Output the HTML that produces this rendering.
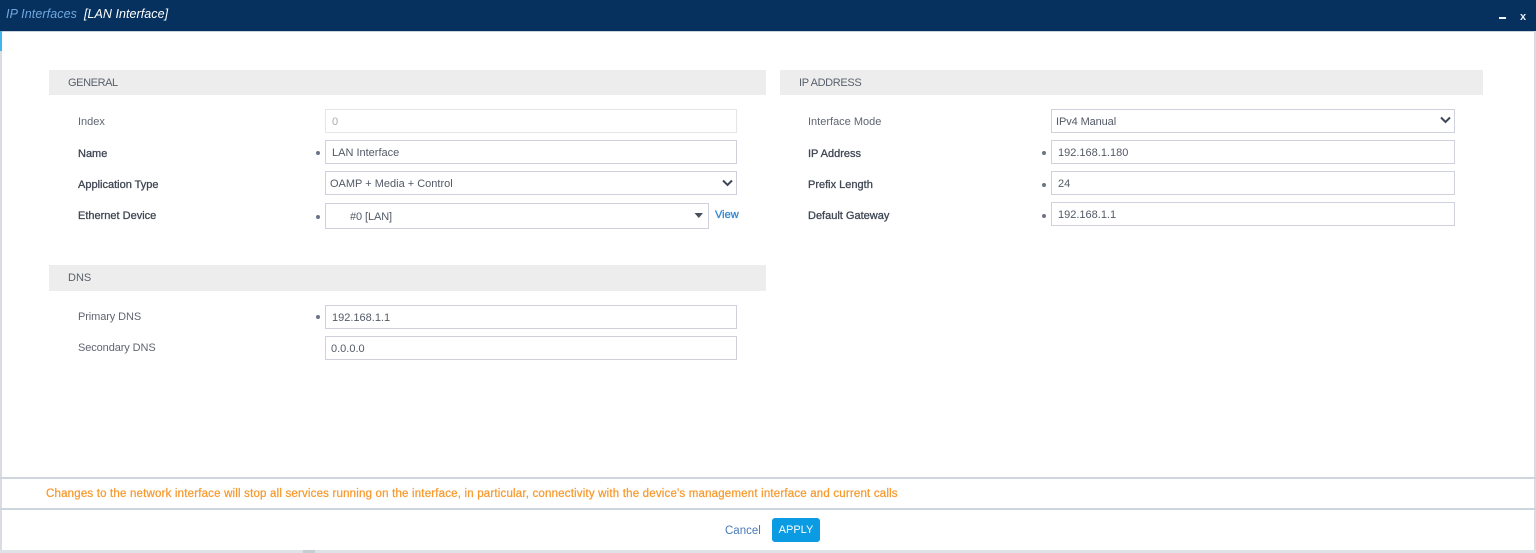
<!DOCTYPE html>
<html><head><meta charset="utf-8"><style>
html,body{margin:0;padding:0;width:1536px;height:553px;overflow:hidden;background:#fff}
#w{position:relative;width:1536px;height:553px;overflow:hidden;background:#fff;font-family:"Liberation Sans",sans-serif;font-size:11px;color:#4d5563;filter:blur(.35px)}
#w div,#w span{position:absolute;white-space:nowrap}
.sec{background:#ededed;height:26px;line-height:26px;color:#5a616c;font-size:11px;box-sizing:border-box;padding-left:19px}
.l{line-height:14px;height:14px;font-size:11px;color:#5f6570}
.b{color:#3f4653;-webkit-text-stroke:.3px #3f4653}
.i{box-sizing:border-box;height:24px;background:#fff;border:1px solid #cfd1dc;line-height:24px;padding-left:6px;font-size:11px;color:#535a66}
.d{width:4px;height:4px;border-radius:50%;background:#6c7488}
</style></head><body><div id="w">
<div style="left:0;top:0;width:1536px;height:31px;background:#06315e"></div>
<div style="left:0;top:31px;width:1536px;height:1px;background:#c9d3de"></div>
<div style="left:0;top:31px;width:2px;height:522px;background:#d9dde2"></div>
<div style="left:0;top:31px;width:2px;height:20px;background:#3fb4ee"></div>
<div style="left:1534px;top:31px;width:2px;height:522px;background:#d9dde2"></div>
<div style="left:6px;top:5.5px;line-height:16px;font-size:12.5px;font-style:italic;color:#6fa8e0;letter-spacing:.1px">IP Interfaces</div>
<div style="left:84px;top:5.5px;line-height:16px;font-size:12.5px;font-style:italic;color:#fff;letter-spacing:.05px">[LAN Interface]</div>
<div style="left:1499px;top:17px;width:7px;height:2px;background:#f2f5f8"></div>
<div style="left:1520px;top:10px;line-height:14px;font-size:11px;font-weight:bold;color:#e8eef5">x</div>

<div class="sec" style="left:49px;top:70px;width:717px;height:25px;letter-spacing:-.4px">GENERAL</div>
<div class="sec" style="left:780px;top:70px;width:703px;height:25px;letter-spacing:-.35px">IP ADDRESS</div>
<div class="sec" style="left:49px;top:265px;width:717px">DNS</div>

<div class="l" style="left:78px;top:115px">Index</div>
<div class="l b" style="left:78px;top:147px">Name</div>
<div class="l b" style="left:78px;top:178px">Application Type</div>
<div class="l b" style="left:78px;top:209px">Ethernet Device</div>
<div class="l" style="left:78px;top:310px;letter-spacing:-.1px">Primary DNS</div>
<div class="l" style="left:78px;top:341px;letter-spacing:-.1px">Secondary DNS</div>

<div class="i" style="left:325px;top:109px;width:412px;color:#a6abb3;border-color:#e4e6ea">0</div>
<div class="d" style="left:316px;top:151px"></div>
<div class="i" style="left:325px;top:140px;width:412px">LAN Interface</div>
<div class="i" style="left:325px;top:171px;width:412px;padding-left:4px">OAMP + Media + Control</div>
<svg style="position:absolute;left:722px;top:179px" width="11" height="8" viewBox="0 0 11 8"><path d="M1 1.5L5.5 6L10 1.5" fill="none" stroke="#3d4858" stroke-width="2"/></svg>
<div class="d" style="left:316px;top:215px"></div>
<div class="i" style="left:325px;top:203px;width:384px;height:26px;line-height:26px;padding-left:24px;letter-spacing:-.1px">#0 [LAN]</div>
<svg style="position:absolute;left:694px;top:212px" width="10" height="7" viewBox="0 0 10 7"><path d="M0.5 1H9L4.8 6Z" fill="#46505f"/></svg>
<div style="left:715px;top:208px;line-height:14px;font-size:11px;color:#2f86d4;-webkit-text-stroke:.3px #2f86d4">View</div>
<div class="d" style="left:316px;top:315px"></div>
<div class="i" style="left:325px;top:305px;width:412px">192.168.1.1</div>
<div class="i" style="left:325px;top:336px;width:412px;padding-left:5px">0.0.0.0</div>

<div class="l" style="left:808px;top:115px">Interface Mode</div>
<div class="l b" style="left:808px;top:147px">IP Address</div>
<div class="l b" style="left:808px;top:178px">Prefix Length</div>
<div class="l b" style="left:808px;top:209px">Default Gateway</div>

<div class="i" style="left:1051px;top:109px;width:404px;padding-left:4px;letter-spacing:-.1px">IPv4 Manual</div>
<svg style="position:absolute;left:1440px;top:116px" width="11" height="8" viewBox="0 0 11 8"><path d="M1 1.5L5.5 6L10 1.5" fill="none" stroke="#3d4858" stroke-width="2"/></svg>
<div class="d" style="left:1042px;top:151px"></div>
<div class="i" style="left:1051px;top:140px;width:404px">192.168.1.180</div>
<div class="d" style="left:1042px;top:183px"></div>
<div class="i" style="left:1051px;top:171px;width:404px">24</div>
<div class="d" style="left:1042px;top:214px"></div>
<div class="i" style="left:1051px;top:202px;width:404px">192.168.1.1</div>

<div style="left:0;top:477px;width:1536px;height:2px;background:#cfd5dc"></div>
<div style="left:0;top:508px;width:1536px;height:2px;background:#cfd5dc"></div>
<div style="left:46px;top:487px;line-height:15px;font-size:11.5px;color:#f79a2e;letter-spacing:.185px;-webkit-text-stroke:.25px #f79a2e">Changes to the network interface will stop all services running on the interface, in particular, connectivity with the device's management interface and current calls</div>
<div style="left:725px;top:524px;line-height:14px;font-size:11.5px;color:#4a7ab8">Cancel</div>
<div style="left:772px;top:518px;width:48px;height:24px;border-radius:3px;background:#0b9be3;color:#fff;text-align:center;line-height:25px;font-size:11px">APPLY</div>
<div style="left:0;top:550px;width:1536px;height:3px;background:#dfe2e6"></div>
<div style="left:303px;top:550px;width:12px;height:3px;background:#c6cdd0"></div>
</div></body></html>
